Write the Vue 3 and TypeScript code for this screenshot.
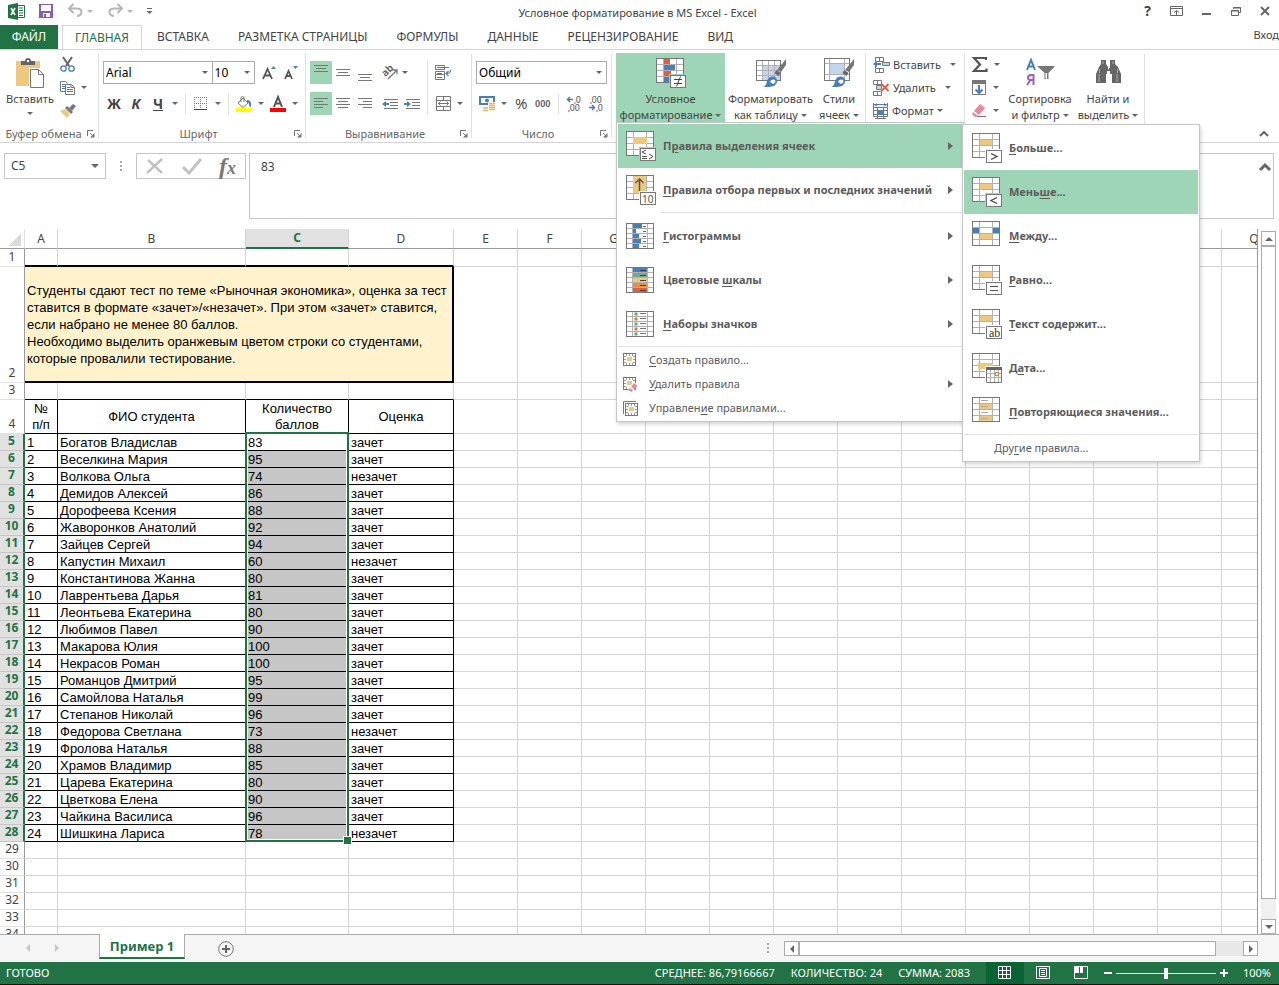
<script setup lang="ts">
import { h, ref } from 'vue'

type Glyph = [number, number, string]

const sheet = (fill: string) =>
  `<rect x=".5" y=".5" width="27" height="24" fill="#fff" stroke="#777"/>
   <path d="M7.5 1v23M20.5 1v23M1 6.5h26M1 12.5h26M1 18.5h26" stroke="#b1b1b1"/>${fill}`
const badge = (inner: string) =>
  `<rect class="gap" x="13" y="16" width="17" height="14"/>
   <rect x="14.5" y="17.5" width="15" height="12" fill="#fff" stroke="#777"/>${inner}`
const tall = (fill: string) =>
  `<rect x=".5" y=".5" width="27" height="25" fill="#fff" stroke="#777"/>
   <path d="M6.5 1v24M21.5 1v24M1 5.5h26M1 10.5h26M1 15.5h26M1 20.5h26" stroke="#b1b1b1"/>${fill}`
const mark = '<rect x="8" y="7" width="12" height="5" fill="#edc87e"/>'
const smallSheet =
  `<rect x=".5" y=".5" width="12" height="12" fill="#fff" stroke="#777"/>
   <path d="M3.5 1v2M9.5 1v2M6.5 1v2M3.5 10v2M9.5 10v2M6.5 10v2M1 3.5h2M1 9.5h2M1 6.5h2M10 3.5h2M10 9.5h2M10 6.5h2" stroke="#999"/>
   <rect x="4" y="4" width="5" height="4" fill="#edc87e"/>`
const brush =
  `<path d="M30 1v6l-5 7-4-2z" fill="#777"/><path d="M20.500 12l4 3-2 3-4-3z" fill="#666"/>
   <path d="M7 29c4-1 3-5 5-8 2-3 6-3 8-1 2 3 1 6-2 8-3 1-7 1-11 1z" fill="#4a7ebb"/><path d="M14 24c1-3 4-3 5-2 1 2 0 3-2 4z" fill="#fff"/>`
const stripe = (xs: number[][]) => `<path d="${xs.map(([x, y, w]) => `M${x} ${y + 0.5}h${w}`).join('')}" stroke="#777"/>`

const glyphs: Record<string, Glyph> = {
  excel: [17, 17, `<path d="M9 2.500h7.500v12H9" fill="#fff" stroke="#217346"/><path d="M11 5h4M11 7.500h4M11 10h4M11 12.500h4" stroke="#217346"/><path d="M0 2l10-2v17L0 15z" fill="#217346"/><path d="M3 5l4 7M7 5l-4 7" stroke="#fff" stroke-width="1.600"/>`],
  save: [14, 14, `<path d="M0 0h14v14H0z" fill="#8a5bae"/><path d="M2 1h10v6H2z" fill="#fff"/><path d="M4 9h7v4H4z" fill="#fff"/><path d="M5 10h2v4H5z" fill="#8a5bae"/>`],
  undo: [15, 13, `<path d="M1 4.500h8c6 0 6 7 0 7.500" fill="none" stroke="#b5b5b5" stroke-width="2"/><path d="M5.500 0L1 4.500 5.500 9" fill="none" stroke="#b5b5b5" stroke-width="2"/>`],
  redo: [15, 13, `<path d="M14 4.500H6c-6 0-6 7 0 7.500" fill="none" stroke="#b5b5b5" stroke-width="2"/><path d="M9.500 0L14 4.500 9.500 9" fill="none" stroke="#b5b5b5" stroke-width="2"/>`],
  custom: [7, 6, `<path d="M1 .5h5" stroke="#666"/><path d="M.5 3h6l-3 3z" fill="#666"/>`],
  ribbonOpt: [13, 10, `<path d="M.5.5h12v9H.5zM1 2.500h12" fill="none" stroke="#666"/><path d="M6.500 9V4.500M4 6.500l2.500-2 2.500 2" fill="none" stroke="#666"/>`],
  minimise: [10, 10, `<path d="M0 7h9v2H0z" fill="#666"/>`],
  restore: [10, 9, `<path d="M2.500 2V.5h7v5H7.500M2 1h8" fill="none" stroke="#666"/><path d="M.5 3.500h7v5H.5zM0 4h8" fill="none" stroke="#666"/>`],
  close: [10, 10, `<path d="M1 1l8 8M9 1L1 9" stroke="#666" stroke-width="2"/>`],
  paste: [29, 30, `<path d="M0 3h24v25H0z" fill="#edc87e"/><path d="M5 3h4c0-4 6-4 6 0h4v4H5z" fill="#666"/><path d="M11 2h2v2h-2z" fill="#fff"/><path d="M13 10h16v20H13z" fill="#fff"/><path d="M14.500 11.500h8l5 5v13h-13z" fill="#fff" stroke="#777"/><path d="M22.500 11.500v5h5" fill="none" stroke="#777"/>`],
  cut: [15, 15, `<path d="M3 0l6 9M12 0L6 9" stroke="#666" stroke-width="2"/><circle cx="3.500" cy="11.500" r="2.700" fill="none" stroke="#4a7ebb" stroke-width="1.300"/><circle cx="11.500" cy="11.500" r="2.700" fill="none" stroke="#4a7ebb" stroke-width="1.300"/>`],
  copy: [15, 14, `<path d="M.5.500h5l2 2v8h-7z" fill="#fff" stroke="#777"/><path d="M2 3.500h3M2 5.500h3M2 7.500h3" stroke="#4a7ebb"/><path d="M5.500 3.500h6l3 3v7h-9z" fill="#fff" stroke="#777"/><path d="M7 6.500h3M7 8.500h6M7 10.500h6" stroke="#4a7ebb"/><path d="M11 3.500v3h3" fill="none" stroke="#777"/>`],
  painter: [16, 14, `<path d="M0 7l5-2 5 5-3 4z" fill="#edc87e"/><path d="M5 4l2-2 6 6-2 2z" fill="#777"/><path d="M9 4l4-4 3 2-4 5z" fill="#777"/>`],
  launcher: [8, 8, `<path d="M.5 6V.5H6" fill="none" stroke="#777"/><path d="M3 3l3 3" stroke="#777"/><path d="M7.500 3v4.500H3z" fill="#777"/>`],
  grow: [14, 14, `<path d="M1 13L5.500 3 10 13M2.500 9.500h6" fill="none" stroke="#555" stroke-width="1.800"/><path d="M9 3l2.500-3L14 3z" fill="#4a7ebb"/>`],
  shrink: [14, 14, `<path d="M1 13l3.500-8L8 13M2 10h5" fill="none" stroke="#555" stroke-width="1.800"/><path d="M9 0h5l-2.500 3z" fill="#4a7ebb"/>`],
  border: [14, 14, `<path d="M.5 0v13M6.500 0v13M12.500 0v13M0 .5h13M0 6.500h13" stroke="#777" stroke-dasharray="1 1"/><path d="M0 12.500h13" stroke="#444"/>`],
  bucket: [16, 16, `<path d="M2 7l5-5 5 5-5 4.500z" fill="#fff" stroke="#777"/><path d="M5 6V2c0-2 3-2 3 0v4" fill="none" stroke="#777"/><path d="M11 4c5 0 4 4 4 7-3 0-1-5-4-5z" fill="#4a7ebb"/><path d="M0 12h16v4H0z" fill="#ff0"/>`],
  fontColor: [16, 16, `<path d="M4 11L8 1l4 10M5.500 7.500h5" fill="none" stroke="#555" stroke-width="2"/><path d="M0 12h16v4H0z" fill="#f00"/>`],
  top: [14, 14, stripe([[0, -1, 14], [2, 2, 10], [0, 5, 14]])],
  middle: [14, 14, stripe([[0, 3, 14], [2, 6, 10], [0, 9, 14]])],
  bottom: [14, 14, stripe([[0, 8, 14], [2, 11, 10], [0, 14, 14]])],
  left: [14, 14, stripe([[0, 1, 14], [0, 4, 9], [0, 7, 14], [0, 10, 9]])],
  center: [14, 14, stripe([[0, 1, 14], [2, 4, 10], [0, 7, 14], [2, 10, 10]])],
  right: [14, 14, stripe([[0, 1, 14], [5, 4, 9], [0, 7, 14], [5, 10, 9]])],
  orient: [17, 15, `<text x="1" y="10" transform="rotate(-45 5 8)" font-family="Noto Sans" font-size="10" font-weight="bold" fill="#666">ab</text><path d="M6 14l9-9M11 5h4v4" fill="none" stroke="#777" stroke-width="1.300"/>`],
  outdent: [16, 12, stripe([[2, 1, 14], [8, 4, 8], [8, 7, 8], [2, 10, 14]]) + `<path d="M0 6l4-3v2h3v2H4v2z" fill="#4a7ebb"/>`],
  indent: [16, 12, stripe([[2, 1, 14], [8, 4, 8], [8, 7, 8], [2, 10, 14]]) + `<path d="M7 6L3 3v2H0v2h3v2z" fill="#4a7ebb"/>`],
  wrap: [16, 16, `<path d="M.5.5h9v4H.5zM.5 6.500h9v3H.5zM.5 9.500h9v5H.5z" fill="none" stroke="#777"/><path d="M2 2.500h12M2 8.500h5M2 12.500h5M15.500 5c0 3-1 3.500-4 3.500M13.500 6L11 8.500l2.500 2.500" fill="none" stroke="#4a7ebb" stroke-width="1.200"/>`],
  merge: [15, 15, `<path d="M.5.5h14v14H.5zM0 4.500h15M0 10.500h15M7.500 1v3M7.500 11v3" fill="none" stroke="#777"/><path d="M2 7.500h11M4.500 5.500l-2 2 2 2M10.500 5.500l2 2-2 2" fill="none" stroke="#4a7ebb"/>`],
  money: [17, 16, `<path d="M1 1h14v7H1z" fill="#fff" stroke="#4a7ebb" stroke-width="2"/><circle cx="8" cy="4.500" r="2" fill="#4a7ebb"/><path d="M9 6h7v9H9zM4 11h6v4H4z" fill="#fff"/><path d="M10 7.500h6M10 9.500h6M10 11.500h6M10 13.500h6M4 12h5M4 14.500h5" stroke="#e5b96b" stroke-width="1.600"/>`],
  percent: [13, 14, `<text x="0" y="12" font-family="Open Sans" font-size="15" fill="#444">%</text>`],
  thousand: [16, 12, `<text x="0" y="9" font-family="Roboto" font-size="9" font-weight="bold" fill="#666">000</text>`],
  incDec: [16, 16, `<path d="M1 3.500h6M4 1L1.500 3.500 4 6" fill="none" stroke="#4a7ebb" stroke-width="1.500"/><text x="8" y="7" font-family="Roboto" font-size="9" fill="#555">,0</text><text x="2" y="15" font-family="Roboto" font-size="9" fill="#555">,00</text>`],
  decDec: [16, 16, `<path d="M1 11.500h6M4 9l2.500 2.500L4 14" fill="none" stroke="#4a7ebb" stroke-width="1.500"/><text x="2" y="7" font-family="Roboto" font-size="9" fill="#555">,00</text><text x="8" y="15" font-family="Roboto" font-size="9" fill="#555">,0</text>`],
  condFormat: [30, 30, sheet(`<path d="M8 1h6v5H8zM8 13h7v5H8z" fill="#dd6040"/><path d="M8 7h11v5H8zM8 19h5v5H8z" fill="#4a7ebb"/>`) + badge(`<path d="M18 21.500h8M18 25.500h8M24.500 18.500l-4 10" stroke="#444"/>`)],
  tableFormat: [30, 30, `<rect x=".5" y="2.500" width="24" height="20" fill="#fff" stroke="#777"/><path d="M7 8h17v14H7z" fill="#c3d5ec"/><path d="M6.500 3v19M12.500 3v19M18.500 3v19M1 7.500h23M1 12.500h23M1 17.500h23" stroke="#b1b1b1"/>` + brush],
  cellStyle: [30, 30, `<rect x=".5" y=".5" width="25" height="22" fill="#fff" stroke="#777"/><path d="M5.500 1v21M20.500 1v21M1 5.500h24M1 16.500h24" stroke="#b1b1b1"/><path d="M6 6h14v10H6z" fill="#c3d5ec"/>` + brush],
  insert: [17, 16, `<path d="M2.500.5h8v4h-8zM6.500.5v4M2.500 11.500h8v4h-8zM6.500 11.500v4M2.500 5v6" fill="none" stroke="#777"/><path d="M9.500 5.500h7v3h-7z" fill="#c3d5ec" stroke="#777"/><path d="M0 7l4-3v2h4v2H4v2z" fill="#4a7ebb"/>`],
  remove: [17, 16, `<path d="M.5.5h8v4h-8zM4.500.5v4M.5 11.500h8v4h-8zM4.500 11.500v4" fill="none" stroke="#777"/><path d="M3.500 5.500h5v4h-5z" fill="#c3d5ec" stroke="#777"/><path d="M8.500 4l7 7M15.500 4l-7 7" stroke="#dd6040" stroke-width="1.800"/>`],
  format: [16, 16, `<path d="M1 1.500h13M.5 0v4M14.500 0v4M4 .5L2 2l2 1M11 .5L13 2l-2 1" fill="none" stroke="#4a7ebb"/><path d="M.5 4.500h14v9H.5zM4.500 5v10M10.500 5v10M1 7.500h13M1 11.500h13M2 15.500h11" fill="none" stroke="#777"/><path d="M5 7h5v5H5z" fill="#4a7ebb"/>`],
  sum: [16, 16, `<path d="M14 3V1H2l6 6.500L2 14h12.500v-2.500" fill="none" stroke="#555" stroke-width="2.200"/>`],
  fill: [15, 16, `<path d="M.5.5h13v14H.5z" fill="#fff" stroke="#777"/><path d="M0 0h14v4H0z" fill="#777"/><path d="M7 5v8M3.500 9.500L7 13l3.500-3.500" fill="none" stroke="#4a7ebb" stroke-width="2"/>`],
  eraser: [15, 14, `<path d="M8 0l5 4-6 7-5-4z" fill="#e8899b"/><path d="M1 8l5 4-2 1H3L0 10z" fill="#e8899b"/><path d="M5 12.500h9" stroke="#777"/>`],
  sort: [30, 28, `<path d="M2 11L6 1l4 10M3.500 7.500h5" fill="none" stroke="#4a7ebb" stroke-width="2"/><path d="M8.500 26V16H6c-4 0-4 5 0 5h2.500M5.500 21L2 26" fill="none" stroke="#9b5fc0" stroke-width="2"/><path d="M12 7h18l-6.500 7v6h-4v-6z" fill="#777"/><path d="M20.500 14h1.500v6.500l-1.500-1.500z" fill="#fff"/>`],
  find: [26, 26, `<path d="M6 0h5v4l2 3v3l2-3V4l0-4h5v4l3 3 3 7v9h-9v-9h-6v9H1v-9l3-7 2-3z" fill="#666"/><path d="M8 1v3M18 1v3M4.500 9v4M4 14v8M22.500 9v4M22 14v8" stroke="#aaa"/><path d="M12 11h3v3h-3z" fill="#fff"/>`],
  rules: [30, 30, sheet('<rect x="7" y="6" width="14" height="7" fill="#edc87e"/>') + badge(`<path d="M20 19l-4 2 4 2M16 25.500h5M16 27.500h5M23 23l4 2.500-4 2.500" fill="none" stroke="#555"/>`)],
  topRules: [30, 30, sheet('<path d="M7 1h13v17H7z" fill="#edc87e"/><path d="M13.500 16V4M9.500 8l4-4 4 4" fill="none" stroke="#555" stroke-width="1.500"/>') + badge(`<text x="16" y="28" font-family="Open Sans" font-size="10" font-weight="400" fill="#444">10</text>`)],
  bars: [28, 26, tall('<path d="M7 1h9v4H7zM7 6h3v4H7zM7 11h6v4H7zM7 16h8v4H7zM7 21h6v4H7z" fill="#4a7ebb"/><path d="M17 3.500h3M17 8.500h3M17 13.500h3M17 18.500h3M17 23.500h3" stroke="#666"/>')],
  scales: [28, 26, tall('<path d="M7 1h14v4H7z" fill="#4a7ebb"/><path d="M7 6h14v4H7z" fill="#70a795"/><path d="M7 11h14v4H7z" fill="#edc87e"/><path d="M7 16h14v4H7z" fill="#e69043"/><path d="M7 21h14v4H7z" fill="#dd6040"/><path d="M14 3.500h6M14 8.500h6M14 13.500h6M14 18.500h6M14 23.500h6" stroke="#444"/>')],
  iconSets: [28, 26, tall('<path d="M8.500 3h3M8.500 13h3M8.500 23h3" stroke="#5fa58d" stroke-width="3"/><path d="M8.500 8h3M8.500 18h3" stroke="#e2762b" stroke-width="3"/><path d="M14 2.500h6M14 7.500h6M14 12.500h6M14 17.500h6M14 22.500h6" stroke="#777"/>')],
  newRule: [14, 14, smallSheet],
  clearRule: [15, 15, smallSheet + `<path d="M11 5l4 3-6 7-4-3z" fill="#fff"/><path d="M11 6l3.500 3-3 3.500L8 10z" fill="#e8899b"/><path d="M7 11l3 2.500-1.500 1.500L5 13z" fill="#e8899b"/>`],
  manageRule: [15, 15, `<path d="M.5 13V.5H13" fill="none" stroke="#777"/><g transform="translate(2 2)">${smallSheet}</g>`],
  greater: [30, 30, sheet(mark) + badge(`<path d="M19 20.500l6 3-6 3" fill="none" stroke="#444" stroke-width="1.300"/>`)],
  less: [30, 30, sheet(mark) + badge(`<path d="M25 20.500l-6 3 6 3" fill="none" stroke="#444" stroke-width="1.300"/>`)],
  between: [30, 30, sheet('<path d="M1 7h6v5H1zM21 7h6v5h-6z" fill="#4a7ebb"/><path d="M8 13h12v5H8z" fill="#edc87e"/>')],
  equal: [30, 30, sheet(mark) + badge(`<path d="M18 21.500h8M18 25.500h8" stroke="#555"/>`)],
  contains: [30, 30, sheet(mark) + badge(`<text x="17" y="28" font-family="Liberation Serif" font-size="12" font-weight="400" fill="#333">ab</text>`)],
  date: [30, 30, sheet('<rect x="6" y="10" width="15" height="6" fill="#edc87e"/>') + `<rect class="gap" x="13" y="13" width="17" height="17"/><path d="M14.500 14.500h15v15h-15z" fill="#fff" stroke="#777"/><path d="M18.500 17v12M22.500 17v12M26.500 17v12M15 20.500h14M15 24.500h14" stroke="#b1b1b1"/><path d="M14 14h16v3H14z" fill="#666"/><path d="M23.500 19.500h3v3h-3z" fill="#fff" stroke="#e2762b"/>`],
  duplicate: [30, 30, sheet('<path d="M8 7h12v5H8zM8 19h12v5H8z" fill="#edc87e"/><path d="M9 3.500h7M9 9.500h7M9 15.500h7M9 21.500h7" stroke="#aaa"/>')],
  cancel: [18, 16, `<path d="M2 2l14 13M16 1L1 15" stroke="#c3c3c3" stroke-width="2.500"/>`],
  accept: [20, 17, `<path d="M1 9l6 6L19 1" fill="none" stroke="#c3c3c3" stroke-width="3"/>`],
  chevron: [10, 6, `<path d="M1 5l4-4 4 4" fill="none" stroke="#666" stroke-width="2"/>`],
  chevronBold: [12, 8, `<path d="M1 7l5-5 5 5" fill="none" stroke="#666" stroke-width="3"/>`],
  addSheet: [16, 16, `<circle cx="8" cy="8" r="7.300" fill="none" stroke="#777"/><path d="M8 4v8M4 8h8" stroke="#666" stroke-width="2"/>`],
  viewNormal: [14, 14, `<path d="M.5.5h12v12H.5zM4.500 1v12M8.500 1v12M1 4.500h12M1 8.500h12" fill="none" stroke="#fff"/>`],
  viewPage: [14, 14, `<path d="M.5.5h13v12H.5zM3.500 2.500h7v8h-7zM5 4.500h4M5 6.500h4M5 8.500h4" fill="none" stroke="#fff"/>`],
  viewBreak: [14, 14, `<path d="M.5.5h13v12H.5z" fill="none" stroke="#fff"/><path d="M0 0h5v7H0zM6 0h3v7H6z" fill="#fff"/>`],
}

const Icon = (p: { name: string }) => {
  const [w, ht, body] = glyphs[p.name]
  return h('svg', { width: w, height: ht, viewBox: `0 0 ${w} ${ht}`, fill: 'none', 'aria-hidden': 'true', innerHTML: body })
}

const tabs = ['ГЛАВНАЯ', 'ВСТАВКА', 'РАЗМЕТКА СТРАНИЦЫ', 'ФОРМУЛЫ', 'ДАННЫЕ', 'РЕЦЕНЗИРОВАНИЕ', 'ВИД']

interface MenuItem { icon?: string; text: [string, string, string]; more?: boolean; line?: boolean }
const mainRules: MenuItem[] = [
  { icon: 'topRules', text: ['', 'П', 'равила отбора первых и последних значений'], more: true, line: true },
  { icon: 'bars', text: ['', 'Г', 'истограммы'], more: true },
  { icon: 'scales', text: ['Цветовые ', 'ш', 'калы'], more: true },
  { icon: 'iconSets', text: ['', 'Н', 'аборы значков'], more: true },
]
const ruleActions: MenuItem[] = [
  { icon: 'newRule', text: ['', 'С', 'оздать правило...'] },
  { icon: 'clearRule', text: ['', 'У', 'далить правила'], more: true },
  { icon: 'manageRule', text: ['Управлен', 'и', 'е правилами...'] },
]
const highlightRules: MenuItem[] = [
  { icon: 'greater', text: ['', 'Б', 'ольше...'] },
  { icon: 'less', text: ['Мень', 'ш', 'е...'] },
  { icon: 'between', text: ['', 'М', 'ежду...'] },
  { icon: 'equal', text: ['', 'Р', 'авно...'] },
  { icon: 'contains', text: ['', 'Т', 'екст содержит...'] },
  { icon: 'date', text: ['Д', 'а', 'та...'] },
  { icon: 'duplicate', text: ['', 'П', 'овторяющиеся значения...'] },
]

const columns = 'ABCDEFGHIJKLMNOPQ'.split('')
const students: [string, number][] = [
  ['Богатов Владислав', 83], ['Веселкина Мария', 95], ['Волкова Ольга', 74], ['Демидов Алексей', 86],
  ['Дорофеева Ксения', 88], ['Жаворонков Анатолий', 92], ['Зайцев Сергей', 94], ['Капустин Михаил', 60],
  ['Константинова Жанна', 80], ['Лаврентьева Дарья', 81], ['Леонтьева Екатерина', 80], ['Любимов Павел', 90],
  ['Макарова Юлия', 100], ['Некрасов Роман', 100], ['Романцов Дмитрий', 95], ['Самойлова Наталья', 99],
  ['Степанов Николай', 96], ['Федорова Светлана', 73], ['Фролова Наталья', 88], ['Храмов Владимир', 85],
  ['Царева Екатерина', 80], ['Цветкова Елена', 90], ['Чайкина Василиса', 96], ['Шишкина Лариса', 78],
]
const grade = (score: number) => (score >= 80 ? 'зачет' : 'незачет')

const fontName = ref('Arial')
const fontSize = ref('10')
const numberFormat = ref('Общий')
const cellName = ref('C5')
const formula = ref('83')
const zoom = ref(50)
</script>

<template>
  <div class="excel">
    <header class="title-bar">
      <div class="quick">
        <Icon name="excel" />
        <button class="plain save" aria-label="Сохранить"><Icon name="save" /></button>
        <button class="plain undo" aria-label="Отменить"><Icon name="undo" /><i class="caret pale"></i></button>
        <button class="plain undo" aria-label="Вернуть"><Icon name="redo" /><i class="caret pale"></i></button>
        <button class="plain" aria-label="Настройка панели"><Icon name="custom" /></button>
      </div>
      <h1>Условное форматирование в MS Excel - Excel</h1>
      <div class="window-keys">
        <button class="plain help" aria-label="Справка">?</button>
        <button class="plain" aria-label="Параметры ленты"><Icon name="ribbonOpt" /></button>
        <button class="plain" aria-label="Свернуть"><Icon name="minimise" /></button>
        <button class="plain" aria-label="Восстановить"><Icon name="restore" /></button>
        <button class="plain" aria-label="Закрыть"><Icon name="close" /></button>
      </div>
    </header>

    <nav class="tabs">
      <button class="file">ФАЙЛ</button>
      <button v-for="(t, i) in tabs" :key="t" class="tab" :class="{ active: i === 0 }">{{ t }}</button>
      <a class="sign-in" href="#">Вход</a>
    </nav>

    <section class="ribbon">
      <div class="group clipboard">
        <div class="body">
          <button class="big"><Icon name="paste" /><span>Вставить</span><i class="caret"></i></button>
          <div class="stack">
            <button class="plain" aria-label="Вырезать"><Icon name="cut" /></button>
            <button class="plain" aria-label="Копировать"><Icon name="copy" /><i class="caret"></i></button>
            <button class="plain" aria-label="Формат по образцу"><Icon name="painter" /></button>
          </div>
        </div>
        <footer><span>Буфер обмена</span><button class="plain" aria-label="Буфер обмена: параметры"><Icon name="launcher" /></button></footer>
      </div>

      <div class="group font">
        <div class="rows">
          <div class="row">
            <label class="drop font-name"><select v-model="fontName" aria-label="Шрифт"><option>Arial</option></select></label>
            <label class="drop font-size"><select v-model="fontSize" aria-label="Размер"><option>10</option></select></label>
            <button class="tool" aria-label="Увеличить размер"><Icon name="grow" /></button>
            <button class="tool" aria-label="Уменьшить размер"><Icon name="shrink" /></button>
          </div>
          <div class="row">
            <button class="tool letter">Ж</button>
            <button class="tool letter italic">К</button>
            <button class="tool letter underlined">Ч</button>
            <button class="more" aria-label="Подчеркивание"><i class="caret"></i></button>
            <i class="rule"></i>
            <button class="tool" aria-label="Границы"><Icon name="border" /></button>
            <button class="more" aria-label="Виды границ"><i class="caret"></i></button>
            <i class="rule"></i>
            <button class="tool" aria-label="Заливка"><Icon name="bucket" /></button>
            <button class="more" aria-label="Цвет заливки"><i class="caret"></i></button>
            <button class="tool" aria-label="Цвет текста"><Icon name="fontColor" /></button>
            <button class="more" aria-label="Выбор цвета текста"><i class="caret"></i></button>
          </div>
        </div>
        <footer><span>Шрифт</span><button class="plain" aria-label="Шрифт: параметры"><Icon name="launcher" /></button></footer>
      </div>

      <div class="group align">
        <div class="split">
          <div class="rows">
            <div class="row">
              <button class="tool on" aria-label="По верхнему краю"><Icon name="top" /></button>
              <button class="tool" aria-label="Посередине"><Icon name="middle" /></button>
              <button class="tool" aria-label="По нижнему краю"><Icon name="bottom" /></button>
              <button class="tool apart" aria-label="Ориентация"><Icon name="orient" /></button>
              <button class="more slim" aria-label="Виды ориентации"><i class="caret"></i></button>
            </div>
            <div class="row">
              <button class="tool on" aria-label="По левому краю"><Icon name="left" /></button>
              <button class="tool" aria-label="По центру"><Icon name="center" /></button>
              <button class="tool" aria-label="По правому краю"><Icon name="right" /></button>
              <button class="tool apart" aria-label="Уменьшить отступ"><Icon name="outdent" /></button>
              <button class="tool" aria-label="Увеличить отступ"><Icon name="indent" /></button>
            </div>
          </div>
          <i class="rule long"></i>
          <div class="rows">
            <div class="row"><button class="tool" aria-label="Перенести текст"><Icon name="wrap" /></button></div>
            <div class="row">
              <button class="tool" aria-label="Объединить"><Icon name="merge" /></button>
              <button class="more" aria-label="Виды объединения"><i class="caret"></i></button>
            </div>
          </div>
        </div>
        <footer><span>Выравнивание</span><button class="plain" aria-label="Выравнивание: параметры"><Icon name="launcher" /></button></footer>
      </div>

      <div class="group number">
        <div class="rows">
          <div class="row">
            <label class="drop format"><select v-model="numberFormat" aria-label="Формат числа"><option>Общий</option></select></label>
          </div>
          <div class="row">
            <button class="tool" aria-label="Финансовый формат"><Icon name="money" /></button>
            <button class="more" aria-label="Виды валют"><i class="caret"></i></button>
            <button class="tool" aria-label="Процентный формат"><Icon name="percent" /></button>
            <button class="tool" aria-label="Разделитель тысяч"><Icon name="thousand" /></button>
            <i class="rule"></i>
            <button class="tool" aria-label="Увеличить разрядность"><Icon name="incDec" /></button>
            <button class="tool" aria-label="Уменьшить разрядность"><Icon name="decDec" /></button>
          </div>
        </div>
        <footer><span>Число</span><button class="plain" aria-label="Число: параметры"><Icon name="launcher" /></button></footer>
      </div>

      <div class="group styles">
        <div class="body">
          <button class="big cond"><Icon name="condFormat" /><span>Условное</span><span>форматирование<i class="caret"></i></span></button>
          <button class="big as-table"><Icon name="tableFormat" /><span>Форматировать</span><span>как таблицу<i class="caret"></i></span></button>
          <button class="big cell-style"><Icon name="cellStyle" /><span>Стили</span><span>ячеек<i class="caret"></i></span></button>
        </div>
        <ul class="menu main-menu">
          <li class="item hot">
            <button><Icon name="rules" /><span>П<u>р</u>авила выделения ячеек</span><i class="arrow"></i></button>
            <ul class="menu sub-menu">
              <li v-for="m in highlightRules" :key="m.icon" class="item" :class="{ hot: m.icon === 'less' }">
                <button><Icon :name="m.icon!" /><span>{{ m.text[0] }}<u>{{ m.text[1] }}</u>{{ m.text[2] }}</span></button>
              </li>
              <li class="line full"></li>
              <li class="item small"><button class="no-icon"><span>Дру<u>г</u>ие правила...</span></button></li>
            </ul>
          </li>
          <template v-for="m in mainRules" :key="m.icon">
            <li class="item"><button><Icon :name="m.icon!" /><span>{{ m.text[0] }}<u>{{ m.text[1] }}</u>{{ m.text[2] }}</span><i class="arrow"></i></button></li>
            <li v-if="m.line" class="line"></li>
          </template>
          <li class="line full"></li>
          <li v-for="m in ruleActions" :key="m.icon" class="item small">
            <button><Icon :name="m.icon!" /><span>{{ m.text[0] }}<u>{{ m.text[1] }}</u>{{ m.text[2] }}</span><i v-if="m.more" class="arrow"></i></button>
          </li>
        </ul>
      </div>

      <div class="group cells">
        <div class="stack">
          <button class="plain"><Icon name="insert" /><span>Вставить</span><i class="caret far"></i></button>
          <button class="plain"><Icon name="remove" /><span>Удалить</span><i class="caret far"></i></button>
          <button class="plain"><Icon name="format" /><span>Формат</span><i class="caret"></i></button>
        </div>
      </div>

      <div class="group editing">
        <div class="stack">
          <button class="plain" aria-label="Сумма"><Icon name="sum" /><i class="caret"></i></button>
          <button class="plain" aria-label="Заполнить"><Icon name="fill" /><i class="caret"></i></button>
          <button class="plain" aria-label="Очистить"><Icon name="eraser" /><i class="caret"></i></button>
        </div>
        <button class="big sorting"><Icon name="sort" /><span>Сортировка</span><span>и фильтр<i class="caret"></i></span></button>
        <button class="big finding"><Icon name="find" /><span>Найти и</span><span>выделить<i class="caret"></i></span></button>
      </div>
      <button class="plain collapse" aria-label="Свернуть ленту"><Icon name="chevron" /></button>
    </section>

    <section class="formula-bar">
      <div class="name-box"><input v-model="cellName" aria-label="Имя ячейки" /><button class="plain" aria-label="Список имен"><i class="caret wide"></i></button></div>
      <i class="dots"></i>
      <div class="fx-keys">
        <button class="plain" aria-label="Отмена"><Icon name="cancel" /></button>
        <button class="plain" aria-label="Ввод"><Icon name="accept" /></button>
        <button class="plain fx" aria-label="Вставить функцию"><em>f</em><em>x</em></button>
      </div>
      <div class="formula">
        <textarea v-model="formula" aria-label="Строка формул"></textarea>
        <button class="plain" aria-label="Свернуть строку формул"><Icon name="chevronBold" /></button>
      </div>
    </section>

    <main class="sheet">
      <div class="cells-area">
        <table>
          <colgroup>
            <col class="w-head" /><col class="w-a" /><col class="w-b" /><col class="w-c" /><col class="w-d" />
            <col v-for="c in columns.slice(4, 16)" :key="c" class="w-std" />
            <col />
          </colgroup>
          <thead>
            <tr>
              <th class="corner"><i></i></th>
              <th v-for="c in columns" :key="c" :class="{ picked: c === 'C', last: c === 'Q' }"><span>{{ c }}</span></th>
            </tr>
          </thead>
          <tbody>
            <tr class="r1">
              <th>1</th>
              <td v-for="c in columns" :key="c" :class="{ over: c < 'E' }"></td>
            </tr>
            <tr class="r2">
              <th>2</th>
              <td colspan="4" class="note">
                Студенты сдают тест по теме «Рыночная экономика», оценка за тест<br />
                ставится в формате «зачет»/«незачет». При этом «зачет» ставится,<br />
                если набрано не менее 80 баллов.<br />
                Необходимо выделить оранжевым цветом строки со студентами,<br />
                которые провалили тестирование.
              </td>
              <td v-for="c in columns.slice(4)" :key="c"></td>
            </tr>
            <tr>
              <th>3</th>
              <td v-for="c in columns" :key="c" :class="{ under: c < 'E' }"></td>
            </tr>
            <tr class="r4">
              <th>4</th>
              <td class="box mid">№<br />п/п</td>
              <td class="box mid">ФИО студента</td>
              <td class="box mid">Количество<br />баллов</td>
              <td class="box mid">Оценка</td>
              <td v-for="c in columns.slice(4)" :key="c"></td>
            </tr>
            <tr v-for="(s, i) in students" :key="s[0]">
              <th class="picked">{{ i + 5 }}</th>
              <td class="box">{{ i + 1 }}</td>
              <td class="box">{{ s[0] }}</td>
              <td class="box score" :class="{ shade: i > 0 }">{{ s[1] }}<i v-if="i === 0" class="selection"></i></td>
              <td class="box">{{ grade(s[1]) }}</td>
              <td v-for="c in columns.slice(4)" :key="c"></td>
            </tr>
            <tr v-for="n in 6" :key="n">
              <th>{{ n + 28 }}</th>
              <td v-for="c in columns" :key="c"></td>
            </tr>
          </tbody>
        </table>
      </div>
      <div class="v-scroll">
        <button aria-label="Вверх"><i class="up"></i></button>
        <div class="track"><div class="thumb"></div></div>
        <button aria-label="Вниз"><i class="down"></i></button>
      </div>
    </main>

    <section class="sheet-bar">
      <div class="sheet-nav"><button class="plain" aria-label="Предыдущий лист"><i class="prev"></i></button><button class="plain" aria-label="Следующий лист"><i class="next"></i></button></div>
      <button class="sheet-tab">Пример 1</button>
      <button class="plain add" aria-label="Новый лист"><Icon name="addSheet" /></button>
      <div class="h-area">
        <i class="dots"></i>
        <div class="h-scroll">
          <button aria-label="Влево"><i class="prev"></i></button>
          <div class="track"><div class="thumb"></div></div>
          <button aria-label="Вправо"><i class="next"></i></button>
        </div>
      </div>
    </section>

    <footer class="status">
      <span class="ready">ГОТОВО</span>
      <div class="totals"><span>СРЕДНЕЕ: 86,79166667</span><span>КОЛИЧЕСТВО: 24</span><span>СУММА: 2083</span></div>
      <div class="views">
        <button class="on" aria-label="Обычный"><Icon name="viewNormal" /></button>
        <button aria-label="Разметка страницы"><Icon name="viewPage" /></button>
        <button aria-label="Страничный режим"><Icon name="viewBreak" /></button>
      </div>
      <div class="zoom">
        <button class="minus" aria-label="Уменьшить"></button>
        <input v-model="zoom" type="range" min="0" max="100" aria-label="Масштаб" />
        <button class="plus" aria-label="Увеличить"></button>
      </div>
      <span class="percent">100%</span>
    </footer>
  </div>
</template>

<style>
html, body { margin: 0; background: #fff; }
.gap { fill: var(--gap, #fff); }
</style>

<style scoped>
* { box-sizing: border-box; }
.excel {
  display: flex; flex-direction: column; height: 100vh; overflow: hidden;
  font: 12px/16px "Noto Sans", "Open Sans", sans-serif; color: #444; background: #fff;
  border-bottom: 1px solid #111;
}
button { font: inherit; color: inherit; border: 0; padding: 0; margin: 0; background: none; }
svg { display: block; flex: none; overflow: visible; }
ul { list-style: none; margin: 0; padding: 0; }
.plain { display: flex; align-items: center; }
.caret { display: inline-block; flex: none; width: 0; height: 0; border: 3px solid transparent; border-top-color: #666; border-bottom: 0; }
.caret.pale { border-top-color: #b5b5b5; }
.caret.wide { border-width: 4px 4px 0; }

.title-bar { position: relative; flex: none; height: 25px; }
.quick { display: flex; align-items: center; height: 22px; padding-left: 8px; }
.save { margin-left: 14px; }
.undo { margin-left: 15px; gap: 4px; }
.quick .undo svg { margin-bottom: 2px; }
.undo + .plain:last-child { margin-left: 13px; }
h1 { position: absolute; inset: 5px 0 auto; margin: 0 4px 0 0; font: inherit; font-size: 11px; text-align: center; pointer-events: none; }
.window-keys { position: absolute; top: 0; right: 9px; height: 22px; display: flex; align-items: center; gap: 19px; }
.help { font-size: 14px; font-weight: 700; }

.tabs { display: flex; flex: none; height: 25px; border-bottom: 1px solid #d4d4d4; overflow: hidden; white-space: nowrap; }
.file { width: 58px; background: #217346; color: #fff; margin-right: 4px; }
.tab { padding: 0 14px 0 15px; }
.tab.active { width: 80px; padding: 0; border: 1px solid #d4d4d4; border-bottom: 0; color: #217346; background: #fff; }
.sign-in { margin-left: auto; color: #444; text-decoration: none; line-height: 20px; font-size: 11px; }

.ribbon { display: flex; flex: none; height: 93px; border-bottom: 1px solid #d4d4d4; position: relative; z-index: 2; white-space: nowrap; font-size: 11px; }
.group { position: relative; display: flex; flex-direction: column; flex: none; padding: 3px 4px 0; }
.group::after { content: ""; position: absolute; right: 0; top: 4px; bottom: 4px; width: 1px; background: #e1e1e1; }
.group footer { margin-top: auto; height: 16px; display: flex; align-items: center; color: #666; }
.group footer span { flex: 1; text-align: center; }
.clipboard { width: 99px; }
.font { width: 207px; }
.align { width: 166px; }
.number { width: 140px; }
.styles { width: 254px; z-index: 3; }
.cells { width: 99px; }
.editing { width: 180px; flex-direction: row; }
.body { display: flex; }
.big { display: flex; flex-direction: column; align-items: center; height: 69px; padding-top: 5px; }
.big svg { height: 30px; margin-bottom: 3px; }
.big .caret { margin-left: 3px; vertical-align: 2px; }
.clipboard .big { width: 52px; }
.clipboard .big .caret { margin: 5px 0 0; }
.clipboard .stack { margin-left: 4px; }
.clipboard footer { padding: 0; margin-left: -4px; }
.stack { display: flex; flex-direction: column; }
.stack .plain { height: 23px; gap: 6px; }
.cond { width: 109px; background: #9fd5b7; --gap: #9fd5b7; }
.as-table { width: 91px; }
.cell-style { width: 46px; }
.sorting { width: 72px; margin-left: 4px; }
.finding { width: 64px; }
.editing .stack { padding-left: 3px; }
.cells .stack { padding-left: 3px; }
.cells .stack .plain { gap: 3px; }
.caret.far { margin-left: 6px; }
.collapse { position: absolute; right: 10px; bottom: 5px; }

.rows { display: flex; flex-direction: column; gap: 8px; padding-top: 8px; }
.row { display: flex; align-items: center; height: 23px; }
.tool { width: 22px; height: 23px; display: flex; align-items: center; justify-content: center; flex: none; }
.tool.on { background: #9fd5b7; }
.more { width: 12px; height: 23px; display: flex; align-items: center; justify-content: center; }
.more.slim { width: 8px; }
.apart { margin-left: 3px; }
.letter { font-size: 14px; font-weight: 700; }
.italic { font-style: italic; }
.underlined { text-decoration: underline; }
.rule { width: 1px; height: 22px; margin: 0 4px; background: #e1e1e1; }
.rule.long { height: 54px; margin-top: 7px; }
.split { display: flex; }
.drop { position: relative; display: block; height: 23px; border: 1px solid #ababab; color: #000; font-size: 12px; }
.drop::after { content: ""; position: absolute; right: 4px; top: 9px; border: 3px solid transparent; border-top-color: #666; border-bottom: 0; }
.drop select { appearance: none; width: 100%; height: 100%; padding: 0 2px; border: 0; background: none; font: inherit; color: inherit; }
.font-name { width: 111px; }
.font-size { width: 44px; margin-left: -1px; }
.font-size + .tool { margin-left: 3px; }
.format { width: 131px; }

.menu { position: absolute; z-index: 1; background: #fff; border: 1px solid #c6c6c6; padding: 1px; box-shadow: 1px 2px 4px rgba(0, 0, 0, .18); color: #5c5c5c; }
.main-menu { left: 4px; top: 72px; width: 348px; }
.sub-menu { left: 344px; top: 0; width: 238px; --gap: #fff; }
.item { position: relative; height: 44px; }
.item > button { width: 100%; height: 44px; display: flex; align-items: center; padding: 0 8px; font-weight: 700; text-align: left; }
.item svg { margin-right: 7px; }
.item svg[width="28"] { margin-right: 9px; }
.item span { flex: 1; }
.hot > button { background: #9fd5b7; --gap: #9fd5b7; }
.arrow { width: 0; height: 0; border: 4px solid transparent; border-left: 5px solid #666; border-right: 0; margin-right: 1px; }
.line { height: 2px; margin-left: 43px; border-top: 1px solid #e1e1e1; }
.line.full { margin-left: 0; }
.small, .small > button { height: 24px; }
.small > button { font-weight: 400; padding-left: 5px; }
.small svg { margin-right: 11px; }
.small svg[width="14"] { margin-right: 12px; }
.small > .no-icon { padding-left: 30px; }
.item u { text-underline-offset: 2px; }

.formula-bar { flex: none; display: flex; align-items: flex-start; height: 86px; padding: 10px 5px 10px 4px; }
.name-box, .fx-keys { height: 26px; border: 1px solid #c6c6c6; display: flex; align-items: center; }
.name-box { width: 102px; padding-right: 6px; }
.name-box input { flex: 1; width: 0; border: 0; padding: 0 6px; font: inherit; color: inherit; background: none; }
.dots { width: 2px; height: 11px; margin: 8px 14px 0; background: repeating-linear-gradient(#ababab 0 2px, transparent 2px 4px); }
.fx-keys { width: 110px; padding: 0 9px; justify-content: space-between; }
.fx { font: 700 24px/24px "Liberation Serif", serif; color: #777; }
.fx em + em { font-size: 18px; margin-top: 4px; }
.formula { flex: 1; display: flex; align-items: flex-start; height: 66px; margin-left: 3px; border: 1px solid #c6c6c6; }
.formula textarea { flex: 1; height: 60px; border: 0; padding: 5px 11px; resize: none; font: inherit; color: inherit; background: none; }
.formula .plain { margin: 9px 2px 0; }

.sheet { flex: 1; min-height: 0; display: flex; }
.cells-area { flex: 1; min-width: 0; overflow: hidden; border-right: 1px solid #9b9b9b; }
table { width: 100%; table-layout: fixed; border-collapse: separate; border-spacing: 0; }
.w-head { width: 25px; }
.w-a { width: 33px; }
.w-b { width: 188px; }
.w-c { width: 103px; }
.w-d { width: 105px; }
.w-std { width: 64px; }
th, td { height: 17px; padding: 0; border: solid #d4d4d4; border-width: 0 1px 1px 0; line-height: 16px; text-align: left; }
thead th { height: 20px; border-bottom-color: #9b9b9b; font-weight: 400; text-align: center; overflow: hidden; }
thead th.last, td:last-child { border-right: 0; }
.last span { display: block; width: 64px; }
thead .picked { background: #e1e1e1; color: #217346; font-weight: 700; border-bottom: 2px solid #217346; }
.corner i { display: block; margin: 2px 0 0 9px; width: 12px; height: 12px; background: linear-gradient(135deg, transparent 50%, #dcdcdc 50%); }
.corner { border-right-color: #e1e1e1; }
tbody th { font-weight: 400; line-height: 14px; padding-bottom: 2px; text-align: center; vertical-align: bottom; border-right-color: #9b9b9b; border-bottom-color: #e1e1e1; }
tbody th.picked { background: #e1e1e1; color: #217346; font-weight: 700; border-right: 2px solid #217346; border-bottom-color: #c6c6c6; }
td { font: 13px/15px "Liberation Sans", Arial, sans-serif; color: #000; padding: 1px 0 0 2px; white-space: nowrap; }
.r1 th, .r1 td { height: 18px; }
.r2 th, .r2 td { height: 116px; }
.r4 th, .r4 td { height: 34px; }
.over { border-bottom: 2px solid #000; }
.under { border-bottom-color: #000; }
.note { background: #fff2cc; border: solid #000; border-width: 0 2px 2px 0; line-height: 17px; }
.box { border-color: #000; }
.box.mid { text-align: center; line-height: 16px; padding: 0; }
.score { position: relative; }
.shade { background: #c6c6c6; }
.selection { position: absolute; z-index: 1; left: -1px; right: -1px; top: -2px; height: 410px; border: 2px solid #217346; box-shadow: inset 0 0 0 1px #fff; }
.selection::after { content: ""; position: absolute; right: -5px; bottom: -5px; width: 7px; height: 7px; background: #217346; border: 1px solid #fff; }

.v-scroll { flex: none; width: 21px; padding: 2px 3px 0; display: flex; flex-direction: column; }
.v-scroll button, .h-scroll button { width: 15px; height: 15px; border: 1px solid #ababab; background: #fff; display: flex; align-items: center; justify-content: center; flex: none; }
.v-scroll .track { flex: 1; background: #f0f0f0; }
.v-scroll .thumb { width: 15px; height: 97%; border: 1px solid #ababab; background: #fff; }
.up, .down { border: 4px solid transparent; }
.up { border-top: 0; border-bottom-color: #666; }
.down { border-bottom: 0; border-top-color: #666; }
.prev, .next { border: 4px solid transparent; }
.prev { border-left: 0; border-right-color: #666; }
.next { border-right: 0; border-left-color: #666; }

.sheet-bar { flex: none; display: flex; height: 28px; background: #f5f5f5; border-top: 1px solid #ababab; }
.sheet-nav { width: 99px; display: flex; align-items: center; gap: 25px; padding: 0 0 2px 26px; }
.sheet-nav .prev { border-right-color: #c6c6c6; }
.sheet-nav .next { border-left-color: #c6c6c6; }
.sheet-tab { width: 86px; height: 25px; margin-top: -1px; background: #fff; color: #217346; font-size: 13px; font-weight: 700; border: 1px solid #ababab; border-width: 0 1px 2px; border-bottom-color: #217346; }
.add { margin-left: 33px; }
.h-area { margin-left: auto; width: 41%; max-width: 516px; display: flex; align-items: flex-start; padding: 6px 21px 0 0; }
.h-area .dots { margin: 2px 15px 0 4px; flex: none; }
.h-scroll { flex: 1; display: flex; }
.h-scroll .track { flex: 1; background: #e8e8e8; }
.h-scroll .thumb { width: 94%; height: 15px; border: 1px solid #ababab; background: #fff; }

.status { flex: none; height: 22px; display: flex; align-items: center; background: #217346; color: #fff; padding: 0 8px 0 6px; white-space: nowrap; font-size: 11px; }
.totals { display: flex; gap: 16px; margin-left: auto; }
.views { display: flex; height: 22px; margin-left: 16px; }
.views button { width: 38px; display: flex; align-items: center; justify-content: center; }
.views .on { background: #0a6332; }
.zoom { display: flex; align-items: center; gap: 4px; margin-left: 4px; }
.zoom button { width: 8px; height: 8px; background: linear-gradient(#fff, #fff) center / 8px 2px no-repeat; }
.zoom .plus { background: linear-gradient(#fff, #fff) center / 8px 2px no-repeat, linear-gradient(#fff, #fff) center / 2px 8px no-repeat; }
.zoom input { appearance: none; width: 100px; height: 12px; margin: 0; background: linear-gradient(#fff, #fff) center / 100% 1px no-repeat; }
.zoom input::-webkit-slider-thumb { appearance: none; width: 4px; height: 11px; background: #fff; }
.percent { width: 43px; text-align: right; }
</style>
